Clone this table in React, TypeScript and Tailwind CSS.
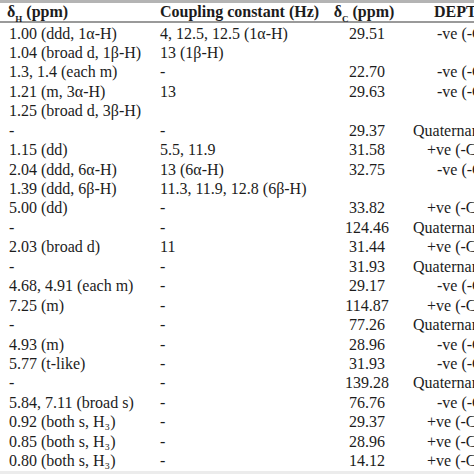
import React from 'react';

type Dept = 'neg' | 'pos' | 'quat' | '';

interface Row {
  h: string;
  j: string;
  c: string;
  dept: Dept;
}

const rows: Row[] = [
  { h: '1.00 (ddd, 1α-H)', j: '4, 12.5, 12.5 (1α-H)', c: '29.51', dept: 'neg' },
  { h: '1.04 (broad d, 1β-H)', j: '13 (1β-H)', c: '', dept: '' },
  { h: '1.3, 1.4 (each m)', j: '-', c: '22.70', dept: 'neg' },
  { h: '1.21 (m, 3α-H)', j: '13', c: '29.63', dept: 'neg' },
  { h: '1.25 (broad d, 3β-H)', j: '', c: '', dept: '' },
  { h: '-', j: '-', c: '29.37', dept: 'quat' },
  { h: '1.15 (dd)', j: '5.5, 11.9', c: '31.58', dept: 'pos' },
  { h: '2.04 (ddd, 6α-H)', j: '13 (6α-H)', c: '32.75', dept: 'neg' },
  { h: '1.39 (ddd, 6β-H)', j: '11.3, 11.9, 12.8 (6β-H)', c: '', dept: '' },
  { h: '5.00 (dd)', j: '-', c: '33.82', dept: 'pos' },
  { h: '-', j: '-', c: '124.46', dept: 'quat' },
  { h: '2.03 (broad d)', j: '11', c: '31.44', dept: 'pos' },
  { h: '-', j: '-', c: '31.93', dept: 'quat' },
  { h: '4.68, 4.91 (each m)', j: '-', c: '29.17', dept: 'neg' },
  { h: '7.25 (m)', j: '-', c: '114.87', dept: 'pos' },
  { h: '-', j: '-', c: '77.26', dept: 'quat' },
  { h: '4.93 (m)', j: '-', c: '28.96', dept: 'neg' },
  { h: '5.77 (t-like)', j: '-', c: '31.93', dept: 'neg' },
  { h: '-', j: '-', c: '139.28', dept: 'quat' },
  { h: '5.84, 7.11 (broad s)', j: '-', c: '76.76', dept: 'neg' },
  { h: '0.92 (both s, H₃)', j: '-', c: '29.37', dept: 'pos' },
  { h: '0.85 (both s, H₃)', j: '-', c: '28.96', dept: 'pos' },
  { h: '0.80 (both s, H₃)', j: '-', c: '14.12', dept: 'pos' },
];

// DEPT column is centred in the source table, cut off at the right edge
const deptText: Record<Dept, string> = {
  neg: '-ve (-CH₂-)',
  pos: '+ve (-CH- or -CH₃)',
  quat: 'Quaternary carbon',
  '': '',
};

const deptPad: Record<Dept, string> = {
  neg: 'pl-[33px]',
  pos: 'pl-[23px]',
  quat: 'pl-[9px]',
  '': '',
};

const Delta: React.FC<{ sub: string }> = ({ sub }) => (
  <span>
    δ<sub className="text-[9px] align-[-3px] leading-none">{sub}</sub> (ppm)
  </span>
);

export default function App() {
  return (
    <div className="w-[474px] h-[474px] overflow-hidden bg-white text-[#1c1c1c] text-[16px] font-['Liberation_Serif',serif] flex flex-col">
      <div className="h-[3px] bg-[#b4b4b4]" />
      <div className="h-[18px] grid grid-cols-[160px_170px_74px_1fr] font-bold leading-[18px] whitespace-nowrap">
        <div className="pl-[7px]">
          <Delta sub="H" />
        </div>
        <div>Coupling constant (Hz)</div>
        <div className="text-center -ml-[6px]">
          <Delta sub="C" />
        </div>
        <div className="pl-[30px]">DEPT-135</div>
      </div>
      <div className="h-[2px] bg-[#9a9a9a]" />
      <div className="flex flex-col pt-[0.5px]">
        {rows.map((r, i) => (
          <div
            key={i}
            className="h-[19.45px] leading-[19.45px] grid grid-cols-[160px_170px_74px_1fr] whitespace-nowrap"
          >
            <div className="pl-[9px]">{r.h}</div>
            <div>{r.j}</div>
            <div className="text-center">{r.c}</div>
            <div className={deptPad[r.dept]}>{deptText[r.dept]}</div>
          </div>
        ))}
      </div>
      <div className="flex-1 bg-[#ececec]" />
    </div>
  );
}
